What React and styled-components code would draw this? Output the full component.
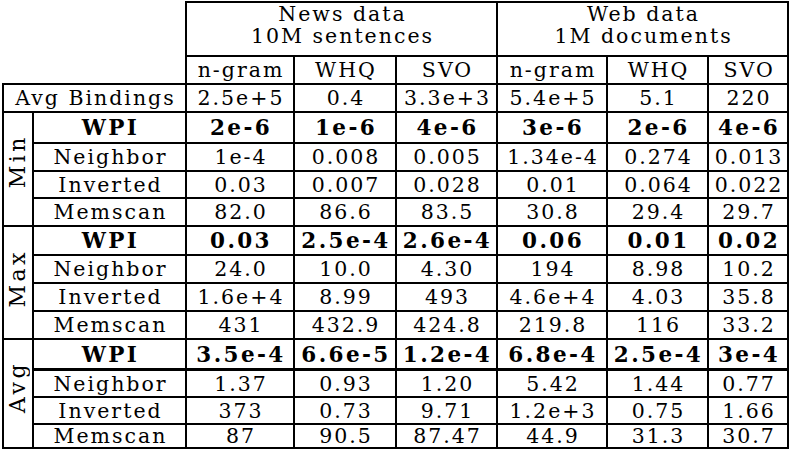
import React from 'react'
import styled, { createGlobalStyle } from 'styled-components'

const GlobalStyle = createGlobalStyle`
  html, body {
    margin: 0;
    padding: 0;
    background: #fff;
  }
  body {
    font-family: 'DejaVu Serif', 'Liberation Serif', serif;
    color: #000;
  }
`

const columns = [30, 153, 108, 102, 101, 110, 101, 80]

const groups = [
  {
    name: 'Min',
    lift: 12,
    rows: [
      { label: 'WPI', h: 31, values: ['2e-6', '1e-6', '4e-6', '3e-6', '2e-6', '4e-6'] },
      { label: 'Neighbor', h: 28, values: ['1e-4', '0.008', '0.005', '1.34e-4', '0.274', '0.013'] },
      { label: 'Inverted', h: 27, values: ['0.03', '0.007', '0.028', '0.01', '0.064', '0.022'] },
      { label: 'Memscan', h: 28, values: ['82.0', '86.6', '83.5', '30.8', '29.4', '29.7'] }
    ]
  },
  {
    name: 'Max',
    lift: 4,
    rows: [
      { label: 'WPI', h: 29, values: ['0.03', '2.5e-4', '2.6e-4', '0.06', '0.01', '0.02'] },
      { label: 'Neighbor', h: 28, values: ['24.0', '10.0', '4.30', '194', '8.98', '10.2'] },
      { label: 'Inverted', h: 28, values: ['1.6e+4', '8.99', '493', '4.6e+4', '4.03', '35.8'] },
      { label: 'Memscan', h: 28, values: ['431', '432.9', '424.8', '219.8', '116', '33.2'] }
    ]
  },
  {
    name: 'Avg',
    lift: 8,
    rows: [
      { label: 'WPI', h: 30, thick: true, values: ['3.5e-4', '6.6e-5', '1.2e-4', '6.8e-4', '2.5e-4', '3e-4'] },
      { label: 'Neighbor', h: 28, values: ['1.37', '0.93', '1.20', '5.42', '1.44', '0.77'] },
      { label: 'Inverted', h: 27, values: ['373', '0.73', '9.71', '1.2e+3', '0.75', '1.66'] },
      { label: 'Memscan', h: 23, values: ['87', '90.5', '87.47', '44.9', '31.3', '30.7'] }
    ]
  }
]

const App = () => (
  <Page>
    <GlobalStyle />
    <Table>
      <colgroup>
        {columns.map((w, i) => <Col key={i} $w={w} />)}
      </colgroup>
      <tbody>
        <Row $h={54}>
          <Blank colSpan={2} rowSpan={2} />
          <Head colSpan={3}>News data<br />10M sentences</Head>
          <Head colSpan={3}>Web data<br />1M documents</Head>
        </Row>
        <Row $h={28}>
          {['n-gram', 'WHQ', 'SVO', 'n-gram', 'WHQ', 'SVO'].map((t, i) => <Cell key={i}>{t}</Cell>)}
        </Row>
        <Row $h={28}>
          <Cell colSpan={2}>Avg Bindings</Cell>
          {['2.5e+5', '0.4', '3.3e+3', '5.4e+5', '5.1', '220'].map((t, i) => <Cell key={i}>{t}</Cell>)}
        </Row>
        {groups.map(g =>
          g.rows.map((r, ri) => (
            <Row key={g.name + r.label} $h={r.h}>
              {ri === 0 && (
                <GroupCell rowSpan={4} $lift={g.lift}>
                  <Vertical>{g.name}</Vertical>
                </GroupCell>
              )}
              <Cell $bold={r.label === 'WPI'} $thick={r.thick}>{r.label}</Cell>
              {r.values.map((v, i) => (
                <Cell key={i} $bold={r.label === 'WPI'} $thick={r.thick}>{v}</Cell>
              ))}
            </Row>
          ))
        )}
      </tbody>
    </Table>
  </Page>
)

const Page = styled.div`
  width: 794px;
  height: 457px;
  padding: 1px 0 0 2px;
  box-sizing: border-box;
  overflow: hidden;
`

const Table = styled.table`
  border-collapse: collapse;
  table-layout: fixed;
  width: 785px;
  font-size: 20.5px;
`

const Col = styled.col`
  width: ${p => p.$w}px;
`

const Row = styled.tr`
  height: ${p => p.$h}px;
`

const Cell = styled.td`
  border: 2px solid #000;
  border-bottom-width: ${p => (p.$thick ? 3 : 2)}px;
  padding: 1px 0 0 2px;
  text-align: center;
  vertical-align: middle;
  white-space: nowrap;
  line-height: 1;
  font-weight: ${p => (p.$bold ? 700 : 400)};
  font-size: ${p => (p.$bold ? 21.5 : 20.5)}px;
  letter-spacing: ${p => (p.$bold ? 2.4 : 2)}px;
`

const Head = styled(Cell)`
  vertical-align: top;
  line-height: 22px;
  padding-top: 0;
`

const GroupCell = styled(Cell)`
  padding: 0 0 ${p => p.$lift}px 0;
`

const Blank = styled.td`
  border: none;
  padding: 0;
`

const Vertical = styled.span`
  display: inline-block;
  writing-mode: vertical-rl;
  transform: rotate(180deg);
  line-height: 1;
  font-size: 22px;
  letter-spacing: 3.5px;
`

export default App
